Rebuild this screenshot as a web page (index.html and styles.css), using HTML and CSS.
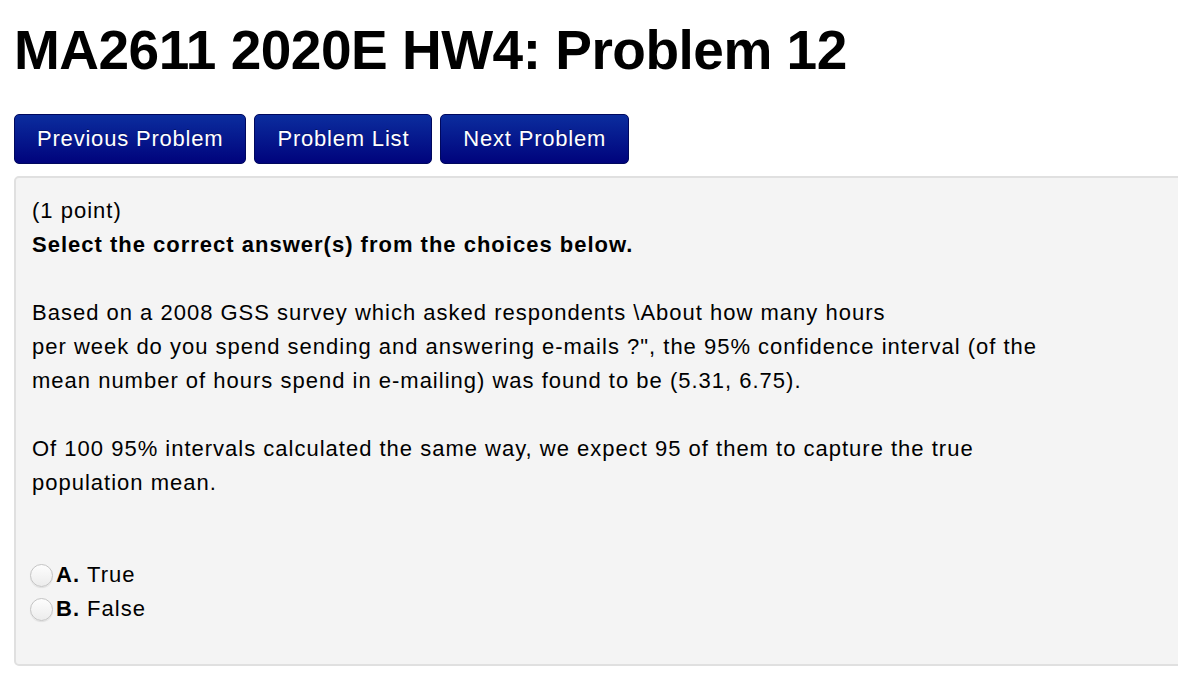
FILE: index.html
```html
<!DOCTYPE html>
<html lang="en">
<head>
  <meta charset="UTF-8" />
  <title>MA2611 2020E HW4: Problem 12</title>
  <link rel="stylesheet" href="styles.css">
</head>
<body>

  <h1 class="page-title">MA2611 2020E HW4: Problem 12</h1>

  <!-- Navegação -->
  <div class="nav">
    <a class="nav-btn" href="#">Previous Problem</a>
    <a class="nav-btn" href="#">Problem List</a>
    <a class="nav-btn" href="#">Next Problem</a>
  </div>

  <!-- Problema -->
  <div class="problem">
    <div class="points">(1 point)</div>
    <div class="instructions">Select the correct answer(s) from the choices below.</div>

    <p>
      Based on a 2008 GSS survey which asked respondents \About how many hours<br>
      per week do you spend sending and answering e-mails ?", the 95% confidence interval (of the<br>
      mean number of hours spend in e-mailing) was found to be (5.31, 6.75).
    </p>

    <p>
      Of 100 95% intervals calculated the same way, we expect 95 of them to capture the true<br>
      population mean.
    </p>

    <div class="choices">
      <label class="choice"><span class="radio"></span><b>A.</b>&nbsp;True</label>
      <label class="choice"><span class="radio"></span><b>B.</b>&nbsp;False</label>
    </div>
  </div>

</body>
</html>
```

FILE: styles.css
```css
html, body {
  overflow: hidden;
}
body {
  font-family: "Liberation Sans", Arial, sans-serif;
  background: #fff;
  color: #000;
  margin: 0;
  padding: 0 0 0 14px;
}

.page-title {
  font-size: 55px;
  font-weight: bold;
  letter-spacing: -0.5px;
  margin: 0;
  padding-top: 18px;
  line-height: 64px;
}

/* Navegação */
.nav {
  display: flex;
  gap: 8px;
  margin-top: 32px;
}
.nav-btn {
  display: flex;
  align-items: center;
  justify-content: center;
  height: 50px;
  box-sizing: border-box;
  padding: 0 22px;
  border: 1px solid #00085e;
  border-radius: 5px;
  background: linear-gradient(#0b2d9e, #00037c);
  color: #fff;
  font-size: 22px;
  letter-spacing: 0.8px;
  text-decoration: none;
  text-shadow: 0 -1px 0 rgba(0,0,0,0.3);
}

/* Problema */
.problem {
  margin-top: 12px;
  margin-right: -30px;
  background: #f4f4f4;
  border: 2px solid #e0e0e0;
  border-radius: 5px;
  padding: 16px 16px 30px 16px;
  font-size: 22px;
  line-height: 34px;
  letter-spacing: 1px;
  height: 490px;
  box-sizing: border-box;
}
.instructions {
  font-weight: bold;
}
.problem p {
  margin: 34px 0 0 0;
}
.choices {
  margin-top: 58px;
}
.choice {
  display: flex;
  align-items: center;
}
.radio {
  width: 21px;
  height: 21px;
  border: 1px solid #c4c4c4;
  border-radius: 50%;
  background: linear-gradient(#fdfdfd, #ececec);
  box-shadow: 0 1px 1px rgba(0,0,0,0.08);
  margin-left: -2px;
  margin-right: 3px;
}
```
